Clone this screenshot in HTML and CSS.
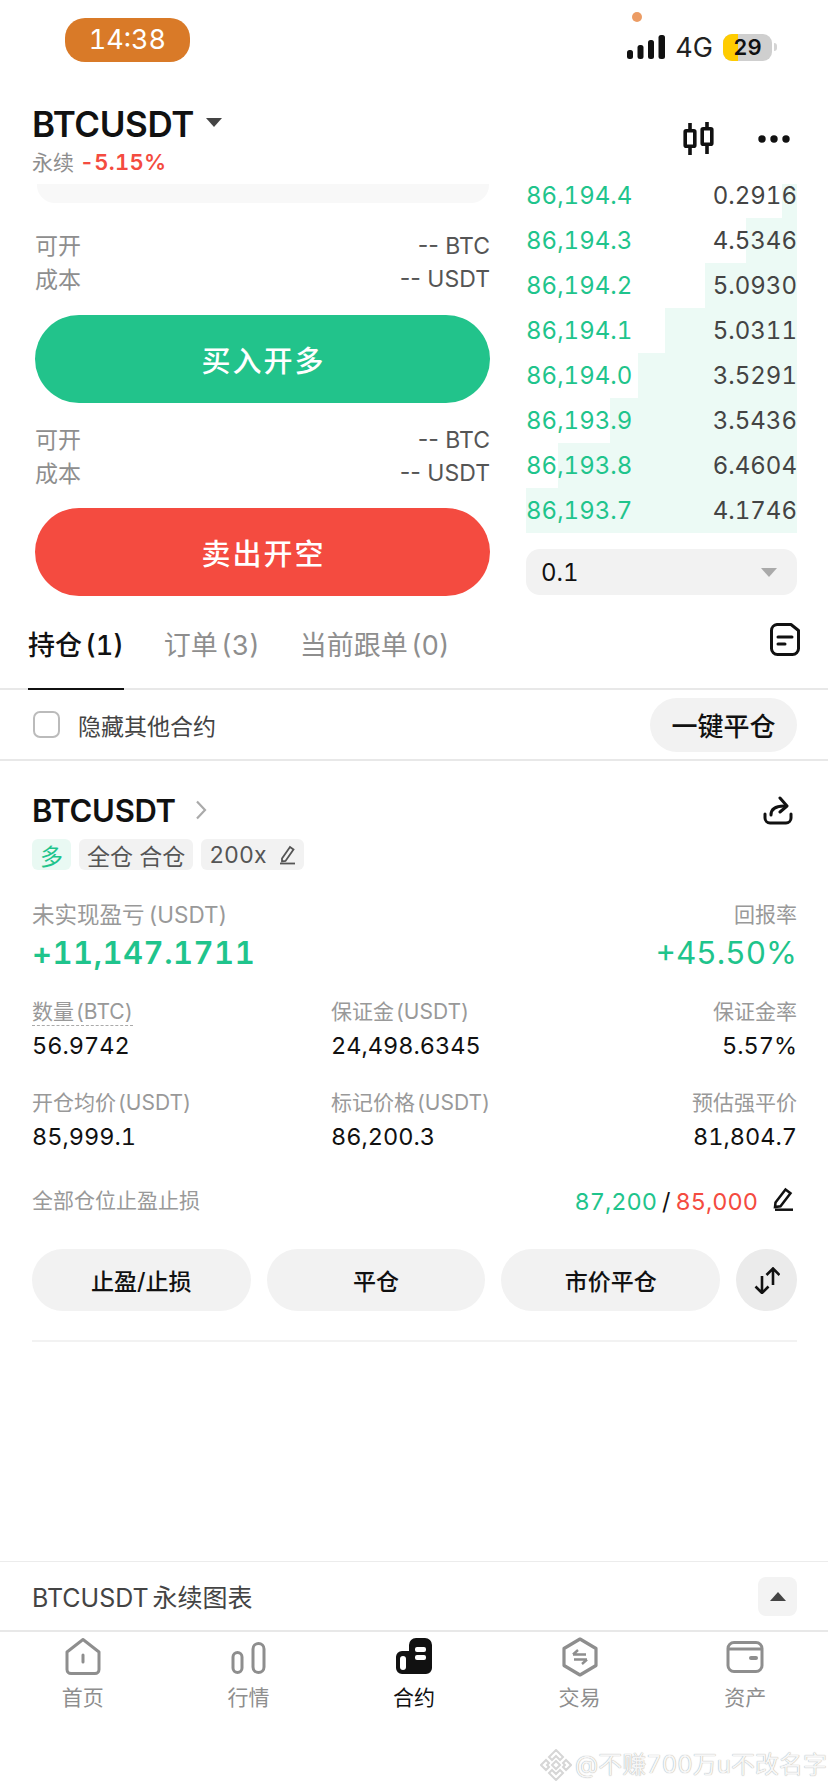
FILE: index.html
```html
<!DOCTYPE html>
<html lang="zh-CN">
<head>
    <meta charset="UTF-8">
    <meta name="viewport" content="width=device-width, initial-scale=1.0">
    <title>BTCUSDT 永续</title>
    <link rel="stylesheet" href="styles.css">
</head>
<body>
    <div class="phone">
        <!-- status bar -->
        <div class="status">
            <span class="time">14:38</span>
            <div class="status-right">
                <span class="rec-dot"></span>
                <svg class="signal" width="38" height="24" viewBox="0 0 38 24">
                    <rect x="0" y="15" width="6" height="9" rx="2.5"/>
                    <rect x="10.5" y="10" width="6" height="14" rx="2.5"/>
                    <rect x="21" y="5" width="6" height="19" rx="2.5"/>
                    <rect x="31.5" y="0" width="6.5" height="24" rx="2.5"/>
                </svg>
                <span class="net">4G</span>
                <span class="battery"><span class="battery-fill"></span><span class="battery-num">29</span></span>
                <span class="battery-tip"></span>
            </div>
        </div>

        <!-- header -->
        <div class="header">
            <div>
                <div class="title-row">
                    <span class="title">BTCUSDT</span>
                    <span class="caret"></span>
                </div>
                <div class="subtitle">永续 <span class="red">-5.15%</span></div>
            </div>
            <div class="header-icons">
                <svg width="34" height="34" viewBox="0 0 34 34" fill="none" stroke="#111" stroke-width="3.6">
                    <path d="M8 1v7M8 25v8M25 0v6M25 24v8"/>
                    <rect x="3.2" y="8.7" width="9.6" height="15.6" rx="1"/>
                    <rect x="20.2" y="6.7" width="9.6" height="15.6" rx="1"/>
                </svg>
                <svg width="34" height="10" viewBox="0 0 34 10" fill="#111">
                    <circle cx="5" cy="5" r="3.7"/><circle cx="17" cy="5" r="3.7"/><circle cx="29" cy="5" r="3.7"/>
                </svg>
            </div>
        </div>

        <!-- trade panel and order book -->
        <div class="main">
            <div class="trade">
                <div class="slider-stub"></div>
                <div class="info info-first">
                    <div class="info-row"><span>可开</span><span>-- BTC</span></div>
                    <div class="info-row"><span>成本</span><span>-- USDT</span></div>
                </div>
                <button class="big-btn buy" type="button">买入开多</button>
                <div class="info">
                    <div class="info-row"><span>可开</span><span>-- BTC</span></div>
                    <div class="info-row"><span>成本</span><span>-- USDT</span></div>
                </div>
                <button class="big-btn sell" type="button">卖出开空</button>
            </div>
            <div class="book">
                <div class="book-row book-row-first"><i style="width:15px"></i><span class="green">86,194.4</span><span>0.2916</span></div>
                <div class="book-row"><i style="width:51px"></i><span class="green">86,194.3</span><span>4.5346</span></div>
                <div class="book-row"><i style="width:92px"></i><span class="green">86,194.2</span><span>5.0930</span></div>
                <div class="book-row"><i style="width:132px"></i><span class="green">86,194.1</span><span>5.0311</span></div>
                <div class="book-row"><i style="width:159px"></i><span class="green">86,194.0</span><span>3.5291</span></div>
                <div class="book-row"><i style="width:187px"></i><span class="green">86,193.9</span><span>3.5436</span></div>
                <div class="book-row"><i style="width:239px"></i><span class="green">86,193.8</span><span>6.4604</span></div>
                <div class="book-row"><i style="width:271px"></i><span class="green">86,193.7</span><span>4.1746</span></div>
                <div class="depth-select"><span>0.1</span><span class="caret caret-light"></span></div>
            </div>
        </div>

        <!-- tabs -->
        <div class="tabs">
            <span class="tab active">持仓 (1)</span>
            <span class="tab">订单 (3)</span>
            <span class="tab">当前跟单 (0)</span>
            <svg class="tabs-icon" width="30" height="33" viewBox="0 0 30 33" fill="none" stroke="#111" stroke-width="3" stroke-linejoin="round" stroke-linecap="round">
                <path d="M7 1.5h14l7.5 6v18a6 6 0 0 1-6 6h-15a6 6 0 0 1-6-6v-18a6 6 0 0 1 5.500-6z"/>
                <path d="M8 14h14M8 21h7"/>
            </svg>
        </div>

        <div class="hide-row">
            <label class="hide-label"><span class="checkbox"></span>隐藏其他合约</label>
            <button class="close-all" type="button">一键平仓</button>
        </div>

        <!-- position card -->
        <div class="position">
            <div class="pos-head">
                <div class="pos-name">
                    <span class="pos-title">BTCUSDT</span>
                    <svg width="12" height="20" viewBox="0 0 12 20" fill="none" stroke="#aaa" stroke-width="2.2"><path d="M2 1.500l8 8.500-8 8.500"/></svg>
                </div>
                <svg width="30" height="29" viewBox="0 0 30 29" fill="none" stroke="#111" stroke-width="3" stroke-linecap="round" stroke-linejoin="round">
                    <path d="M2 18v4a5 5 0 0 0 5 5h16a5 5 0 0 0 5-5v-4"/>
                    <path d="M8 19c0-6 5-9 13-9"/>
                    <path d="M17 2l7 8-7 6"/>
                </svg>
            </div>
            <div class="tags">
                <span class="tag tag-long">多</span>
                <span class="tag">全仓 合仓</span>
                <span class="tag">200x
                    <svg width="17" height="20" viewBox="0 0 17 20" fill="none" stroke="#555" stroke-width="1.800"><path d="M3 13.500L11 2l3.500 2.500-8 11.500-3.500 .5z"/><path d="M1 18.500h15"/></svg>
                </span>
            </div>
            <div class="pnl">
                <div>
                    <div class="label label-big">未实现盈亏 (USDT)</div>
                    <div class="pnl-value green strong">+11,147.1711</div>
                </div>
                <div class="right">
                    <div class="label">回报率</div>
                    <div class="pnl-value green">+45.50%</div>
                </div>
            </div>
            <div class="stats">
                <div><div class="label"><span class="dashed">数量 (BTC)</span></div><div class="value">56.9742</div></div>
                <div><div class="label">保证金 (USDT)</div><div class="value">24,498.6345</div></div>
                <div class="right"><div class="label">保证金率</div><div class="value">5.57%</div></div>
                <div><div class="label">开仓均价 (USDT)</div><div class="value">85,999.1</div></div>
                <div><div class="label">标记价格 (USDT)</div><div class="value">86,200.3</div></div>
                <div class="right"><div class="label">预估强平价</div><div class="value">81,804.7</div></div>
            </div>
            <div class="tpsl">
                <span class="label">全部仓位止盈止损</span>
                <div class="tpsl-right">
                    <span class="green">87,200</span><span class="slash">/</span><span class="red">85,000</span>
                    <svg width="21" height="24" viewBox="0 0 21 24" fill="none" stroke="#111" stroke-width="2.500"><path d="M2.500 15.500L12.500 2.500l5 3.800-10 13-5.500 .7z"/><path d="M2 22.700h18"/></svg>
                </div>
            </div>
            <div class="actions">
                <button class="action" type="button">止盈/止损</button>
                <button class="action" type="button">平仓</button>
                <button class="action" type="button">市价平仓</button>
                <button class="swap" type="button">
                    <svg width="26" height="27" viewBox="0 0 26 27" fill="none" stroke="#111" stroke-width="2.600"><path d="M8 9v17M1.500 19.500L8 26l6.500-6.500"/><path d="M19 18V1.500M12.500 8L19 1.500 25.500 8"/></svg>
                </button>
            </div>
        </div>

        <div class="spacer"></div>

        <div class="chart-bar">
            <span>BTCUSDT 永续图表</span>
            <span class="chart-toggle"><span class="caret-up"></span></span>
        </div>

        <!-- bottom nav -->
        <div class="nav">
            <div class="nav-item">
                <svg width="38" height="40" viewBox="0 0 38 40" fill="none" stroke="#8e8e8e" stroke-width="3" stroke-linejoin="round">
                    <path d="M19 2.500L35 15v17.500a4 4 0 0 1-4 4H7a4 4 0 0 1-4-4V15z"/>
                    <path d="M19 18v7" stroke-linecap="round"/>
                </svg>
                <span>首页</span>
            </div>
            <div class="nav-item">
                <svg width="38" height="40" viewBox="0 0 38 40" fill="none" stroke="#8e8e8e" stroke-width="3">
                    <rect x="4" y="15.500" width="9" height="20" rx="4.500"/>
                    <rect x="24" y="6.500" width="11" height="29" rx="5.500"/>
                </svg>
                <span>行情</span>
            </div>
            <div class="nav-item active">
                <svg width="38" height="40" viewBox="0 0 38 40">
                    <path fill="#111" d="M14 8a7 7 0 0 1 7-7h9a7 7 0 0 1 7 7v23a6 6 0 0 1-6 6H7a6 6 0 0 1-6-6V20a6 6 0 0 1 6-6h7z"/>
                    <rect x="5" y="19" width="6" height="14" rx="3" fill="#fff"/>
                    <rect x="20" y="10" width="11" height="5" rx="2" fill="#fff"/>
                    <rect x="20" y="18" width="11" height="5" rx="2" fill="#fff"/>
                </svg>
                <span>合约</span>
            </div>
            <div class="nav-item">
                <svg width="38" height="40" viewBox="0 0 38 40" fill="none" stroke="#8e8e8e" stroke-width="3.200" stroke-linejoin="round">
                    <path d="M19 2L35 11.500v17L19 38 3 28.500v-17z"/>
                    <path stroke-width="2.400" d="M12 17.500h13M17 13l-5 4.500M26 22.500H13M21 27l5-4.500"/>
                </svg>
                <span>交易</span>
            </div>
            <div class="nav-item">
                <svg width="38" height="40" viewBox="0 0 38 40" fill="none" stroke="#8e8e8e" stroke-width="3">
                    <rect x="2" y="5.500" width="34" height="29" rx="6"/>
                    <path d="M3 12h32"/>
                    <path d="M25 21h5" stroke-width="4" stroke-linecap="round"/>
                </svg>
                <span>资产</span>
            </div>
        </div>

        <!-- watermark over the photo -->
        <div class="watermark">
            <svg width="32" height="32" viewBox="0 0 32 32" fill="none" stroke="#d6d6d6" stroke-width="2">
                <path d="M16 1l7 7-3 3-4-4-4 4-3-3zM1 16l5-5 3 3-2 2 2 2-3 3zM31 16l-5-5-3 3 2 2-2 2 3 3zM16 12l4 4-4 4-4-4zM16 31l7-7-3-3-4 4-4-4-3 3z"/>
            </svg>
            <span>@不赚700万u不改名字</span>
        </div>
    </div>
</body>
</html>
```
FILE: styles.css
```css
* {
    box-sizing: border-box;
}
body {
    margin: 0;
    background: #fff;
    font-family: "Inter", "Noto Sans CJK SC", sans-serif;
    font-variant-numeric: tabular-nums;
    color: #111;
}
button {
    font-family: inherit;
    border: 0;
    padding: 0;
}
.phone {
    position: relative;
    width: 828px;
    height: 1792px;
    overflow: hidden;
    display: flex;
    flex-direction: column;
}
.green {
    color: #1fc48c;
}
.red {
    color: #f44b40;
}
.right {
    text-align: right;
}

/* status bar */
.status {
    height: 90px;
    flex: none;
    display: flex;
    justify-content: space-between;
    padding: 18px 51px 0 65px;
}
.time {
    width: 125px;
    height: 44px;
    border-radius: 20px;
    background: #d97a28;
    color: #fff;
    font-size: 27px;
    line-height: 44px;
    text-align: center;
}
.status-right {
    position: relative;
    display: flex;
    align-items: center;
    height: 42px;
    margin-top: 8px;
}
.rec-dot {
    position: absolute;
    left: 5px;
    top: -14px;
    width: 10px;
    height: 10px;
    border-radius: 50%;
    background: #ec9c64;
}
.signal {
    fill: #111;
}
.net {
    margin-left: 10px;
    font-size: 27px;
    color: #222;
}
.battery {
    position: relative;
    width: 49px;
    height: 27px;
    margin-left: 10px;
    border-radius: 9px;
    overflow: hidden;
    background: #cfcfcf;
    display: block;
}
.battery-fill {
    position: absolute;
    left: 0;
    top: 0;
    bottom: 0;
    width: 15px;
    background: #ffcc00;
}
.battery-num {
    position: relative;
    display: block;
    font-size: 22px;
    font-weight: 600;
    line-height: 27px;
    text-align: center;
}
.battery-tip {
    width: 3px;
    height: 8px;
    margin-left: 2px;
    background: #d4d4d4;
    border-radius: 0 3px 3px 0;
}

/* header */
.header {
    height: 94px;
    flex: none;
    display: flex;
    justify-content: space-between;
    padding: 15px 37px 0 32px;
}
.title-row {
    display: flex;
    align-items: center;
    height: 38px;
}
.title {
    font-size: 35px;
    font-weight: 600;
    letter-spacing: -0.4px;
}
.caret {
    width: 0;
    height: 0;
    margin-left: 12px;
    margin-top: -4px;
    border-left: 8px solid transparent;
    border-right: 8px solid transparent;
    border-top: 9px solid #444;
}
.caret-light {
    margin: 0;
    border-top-color: #aaa;
}
.subtitle {
    margin-top: 5px;
    font-size: 21px;
    line-height: 28px;
    color: #8e8e8e;
}
.subtitle .red {
    font-size: 22px;
    font-weight: 600;
    letter-spacing: 0.3px;
}
.header-icons {
    display: flex;
    align-items: center;
    gap: 41px;
    height: 64px;
    padding-top: 3px;
}

/* trade panel and order book */
.main {
    flex: none;
    height: 416px;
    display: flex;
    padding: 0 31px 0 35px;
}
.trade {
    width: 456px;
    flex: none;
}
.slider-stub {
    width: 452px;
    height: 19px;
    margin-left: 2px;
    border-radius: 0 0 18px 18px;
    background: #f8f8f8;
}
.info {
    padding-top: 20px;
    padding-right: 1px;
}
.info-first {
    padding-top: 26px;
}
.info-first + .big-btn {
    margin-top: 19px;
}
.info-row {
    display: flex;
    justify-content: space-between;
    height: 33.500px;
    align-items: center;
    font-size: 23px;
    color: #8e8e8e;
    font-variant-numeric: normal;
}
.info-row span:first-child {
    margin-bottom: 3px;
}
.info-row span:last-child {
    color: #555;
    font-size: 23px;
}
.big-btn {
    display: block;
    width: 455px;
    height: 88px;
    margin-top: 18px;
    padding-left: 2px;
    border-radius: 44px;
    color: #fff;
    font-size: 29px;
    font-weight: 500;
    letter-spacing: 2px;
}
.buy {
    background: #22c38b;
}
.sell {
    background: #f44b40;
}
.book {
    width: 271px;
    margin-left: 35px;
    flex: none;
}
.book-row {
    position: relative;
    height: 45px;
    display: flex;
    justify-content: space-between;
    align-items: center;
    font-size: 24px;
    line-height: 24px;
    color: #444;
}
.book-row-first {
    height: 34px;
    align-items: flex-start;
}
.book-row i {
    position: absolute;
    right: 0;
    top: 0;
    bottom: 0;
    background: #ecfaf5;
}
.book-row span {
    position: relative;
}
.depth-select {
    height: 46px;
    margin-top: 16px;
    border-radius: 14px;
    background: #f2f2f2;
    display: flex;
    justify-content: space-between;
    align-items: center;
    padding: 0 20px 0 15px;
    font-size: 24px;
}

/* tabs */
.tabs {
    position: relative;
    flex: none;
    height: 90px;
    display: flex;
    align-items: flex-start;
    gap: 40px;
    padding: 0 28px;
    border-bottom: 2px solid #e8e8e8;
}
.tab {
    position: relative;
    padding-top: 28px;
    height: 90px;
    font-size: 27px;
    line-height: 36px;
    word-spacing: -4px;
    color: #8e8e8e;
}
.tab.active {
    color: #111;
    font-weight: 500;
    border-bottom: 2px solid #111;
}
.tabs-icon {
    margin-left: auto;
    margin-top: 23px;
}
.hide-row {
    flex: none;
    height: 71px;
    display: flex;
    justify-content: space-between;
    align-items: center;
    padding: 0 31px 0 33px;
    border-bottom: 2px solid #e8e8e8;
}
.hide-label {
    display: flex;
    align-items: center;
    gap: 18px;
    font-size: 23px;
    color: #444;
}
.checkbox {
    width: 27px;
    height: 27px;
    border: 2px solid #bbb;
    border-radius: 7px;
}
.close-all {
    width: 147px;
    height: 54px;
    border-radius: 27px;
    background: #f2f2f2;
    font-size: 26px;
    color: #111;
    font-weight: 500;
}

/* position card */
.position {
    flex: none;
    margin: 0 31px 0 32px;
    padding-top: 31px;
    height: 581px;
    border-bottom: 2px solid #f2f2f2;
}
.pos-head {
    display: flex;
    justify-content: space-between;
    align-items: center;
    height: 36px;
    padding-right: 4px;
}
.pos-name {
    display: flex;
    align-items: center;
    gap: 19px;
}
.pos-title {
    font-size: 31px;
    font-weight: 600;
    letter-spacing: -0.3px;
}
.tags {
    display: flex;
    gap: 8px;
    margin-top: 11px;
}
.tag {
    display: flex;
    align-items: center;
    gap: 12px;
    height: 31px;
    padding: 0 8px;
    border-radius: 6px;
    background: #f2f2f2;
    font-size: 23px;
    color: #555;
}
.tag-long {
    background: #e9f9f3;
    color: #1fc48c;
}
.label {
    font-size: 21px;
    line-height: 30px;
    color: #999;
    word-spacing: -4px;
}
.label-big {
    font-size: 22.500px;
    word-spacing: -2px;
}
.dashed {
    border-bottom: 1px dashed #aaa;
    display: inline-block;
    line-height: 26px;
}
.pnl {
    display: flex;
    justify-content: space-between;
    margin-top: 30px;
}
.pnl-value {
    margin-top: 3px;
    font-size: 31.500px;
    line-height: 40px;
}
.pnl-value.strong {
    font-size: 31px;
    font-weight: 600;
    letter-spacing: 0.5px;
}
.stats {
    display: grid;
    grid-template-columns: 299px 1fr auto;
    row-gap: 25px;
    margin-top: 24px;
}
.value {
    margin-top: 2px;
    font-size: 23.500px;
    line-height: 34px;
    color: #111;
}
.tpsl {
    display: flex;
    justify-content: space-between;
    align-items: center;
    margin-top: 30px;
    height: 34px;
}
.tpsl-right {
    display: flex;
    align-items: center;
    font-size: 23.500px;
    padding-right: 3px;
}
.slash {
    margin: 0 5px;
}
.tpsl-right svg {
    margin-left: 15px;
    margin-top: -4px;
}
.actions {
    display: flex;
    gap: 16px;
    margin-top: 31px;
}
.action {
    width: 219px;
    height: 62px;
    border-radius: 31px;
    background: #f2f2f2;
    color: #111;
    font-size: 23px;
    font-weight: 500;
}
.swap {
    width: 61px;
    height: 62px;
    border-radius: 50%;
    background: #ebebeb;
    display: flex;
    align-items: center;
    justify-content: center;
}
.spacer {
    flex: 1;
}

/* bottom */
.chart-bar {
    flex: none;
    height: 71px;
    display: flex;
    justify-content: space-between;
    align-items: center;
    padding: 0 31px 0 32px;
    border-top: 1px solid #ececec;
    border-bottom: 2px solid #e8e8e8;
    font-size: 25px;
    word-spacing: -3px;
    color: #444;
}
.chart-toggle {
    width: 39px;
    height: 39px;
    border-radius: 8px;
    background: #f3f3f3;
    display: flex;
    align-items: center;
    justify-content: center;
}
.caret-up {
    width: 0;
    height: 0;
    border-left: 8px solid transparent;
    border-right: 8px solid transparent;
    border-bottom: 9px solid #444;
}
.nav {
    flex: none;
    height: 160px;
    display: grid;
    grid-template-columns: repeat(5, 1fr);
    padding-top: 5px;
}
.nav-item {
    display: flex;
    flex-direction: column;
    align-items: center;
    font-size: 21px;
    color: #8e8e8e;
}
.nav-item span {
    margin-top: 6px;
    line-height: 30px;
}
.nav-item.active {
    color: #111;
}
.watermark {
    position: absolute;
    left: 540px;
    top: 1749px;
    display: flex;
    align-items: center;
    gap: 3px;
    font-size: 24px;
    line-height: 32px;
    white-space: nowrap;
    color: #f6f6f6;
    text-shadow: 0 0 1px #909090;
}
```
